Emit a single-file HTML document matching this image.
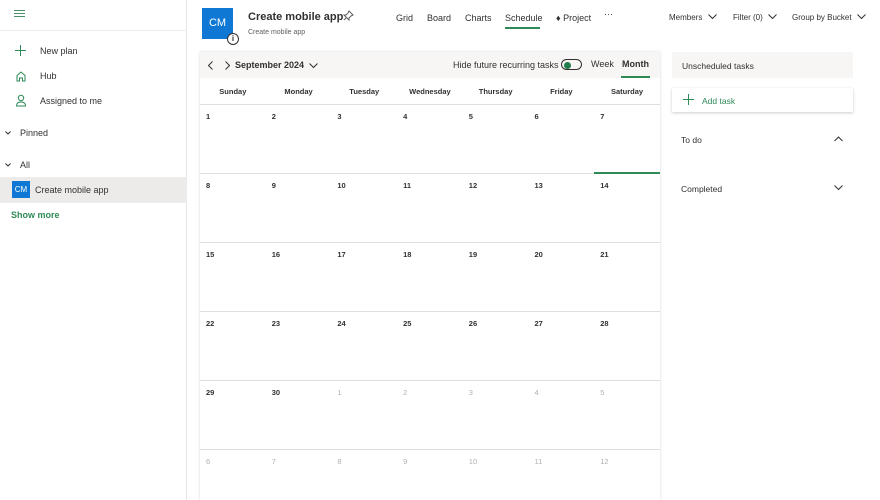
<!DOCTYPE html><html><head><style>
*{margin:0;padding:0;box-sizing:border-box}
body{width:880px;height:500px;overflow:hidden;background:#fff;font-family:"Liberation Sans",sans-serif;color:#323130;position:relative;font-size:9px}
.a{position:absolute}
.side{left:0;top:0;width:187px;height:500px;border-right:1px solid #e5e5e5}
.nav{left:40px;font-size:9px;color:#323130}
.cal{left:200px;top:52px;width:460px;height:448px;box-shadow:0 0 3px rgba(0,0,0,.15);background:#fff}
.tb{left:0;top:0;width:460px;height:26px;background:#f7f6f5}
.wd{top:35px;font-size:7.5px;font-weight:bold;width:65.7px;text-align:center}
.hl{left:0;width:460px;height:1px;background:#e1dfdd}
.dn{font-size:7.5px;font-weight:bold}
.g{color:#b3b0ad;font-weight:normal}
svg.c{position:absolute;fill:none;stroke:#323130;stroke-width:1}
</style></head><body>
<div class="a side">
<div class="a" style="left:14px;top:10px;width:11px;height:1px;background:#4b8f68;box-shadow:0 3px 0 #4b8f68,0 6px 0 #4b8f68"></div>
<div class="a" style="left:0;top:30px;width:187px;height:1px;background:#edebe9"></div>
<svg class="c" style="left:15px;top:45px;stroke:#2e8a57" width="11" height="11"><path d="M5.5 0v11M0 5.5h11"/></svg>
<div class="a nav" style="top:46px">New plan</div>
<svg class="a" style="left:15px;top:70px" width="12" height="12" viewBox="0 0 12 12"><path d="M2 5.5L6 2l4 3.5V11H7.5V8h-3v3H2z" fill="none" stroke="#2e8a57" stroke-width="1"/></svg>
<div class="a nav" style="top:71px">Hub</div>
<svg class="a" style="left:15px;top:94px" width="12" height="13" viewBox="0 0 12 13"><circle cx="6" cy="4" r="2.7" fill="none" stroke="#2e8a57"/><path d="M1.5 12c0-3 2-4 4.5-4s4.5 1 4.5 4z" fill="none" stroke="#2e8a57"/></svg>
<div class="a nav" style="top:96px">Assigned to me</div>
<svg class="c" style="left:5px;top:131px" width="6" height="4"><path d="M.5.5l2.5 2.5 2.5-2.5"/></svg>
<div class="a" style="left:20px;top:128px">Pinned</div>
<svg class="c" style="left:5px;top:163px" width="6" height="4"><path d="M.5.5l2.5 2.5 2.5-2.5"/></svg>
<div class="a" style="left:20px;top:160px">All</div>
<div class="a" style="left:0;top:177px;width:187px;height:26px;background:#edebe9"></div>
<div class="a" style="left:12px;top:181px;width:18px;height:17px;background:#0f78d4;color:#fff;font-size:8px;text-align:center;line-height:17px">CM</div>
<div class="a" style="left:35px;top:185px">Create mobile app</div>
<div class="a" style="left:11px;top:210px;color:#2e8a57;font-weight:bold">Show more</div>
</div>
<div class="a" style="left:202px;top:8px;width:31px;height:31px;background:#0f78d4;color:#fff;font-size:11px;text-align:center;line-height:31px">CM</div>
<div class="a" style="left:227px;top:33px;width:12px;height:12px;border-radius:50%;border:1px solid #323130;background:#fff;font-size:8px;text-align:center;line-height:10px;font-weight:bold">i</div>
<div class="a" style="left:248px;top:11px;font-size:11px;font-weight:bold;color:#323130">Create mobile app</div>
<svg class="c" style="left:343px;top:10px;stroke:#605e5c" width="11" height="11"><path d="M6 1l4 4-2 1-2 2 0 2-5-5 2 0 2-2z M3.5 7.5L1 10"/></svg>
<div class="a" style="left:248px;top:29px;font-size:7px;color:#605e5c">Create mobile app</div>
<div class="a" style="left:396px;top:13px;font-size:9px">Grid</div>
<div class="a" style="left:427px;top:13px;font-size:9px">Board</div>
<div class="a" style="left:465px;top:13px;font-size:9px">Charts</div>
<div class="a" style="left:505px;top:13px;font-size:9px">Schedule</div>
<div class="a" style="left:505px;top:27px;width:35px;height:2px;background:#2e8a57"></div>
<div class="a" style="left:556px;top:13px;font-size:9px">♦ Project</div>
<div class="a" style="left:604px;top:9px;font-size:9px">···</div>
<div class="a" style="left:669px;top:13px;font-size:8px">Members</div>
<svg class="c" style="left:708px;top:14px" width="9" height="6"><path d="M.5.5l4 4 4-4"/></svg>
<div class="a" style="left:733px;top:13px;font-size:8px">Filter (0)</div>
<svg class="c" style="left:768px;top:14px" width="9" height="6"><path d="M.5.5l4 4 4-4"/></svg>
<div class="a" style="left:792px;top:13px;font-size:8px">Group by Bucket</div>
<svg class="c" style="left:857px;top:14px" width="9" height="6"><path d="M.5.5l4 4 4-4"/></svg>
<div class="a cal">
<div class="a tb"></div>
<svg class="c" style="left:8px;top:9px" width="5" height="9"><path d="M4.5.5l-4 4 4 4"/></svg>
<svg class="c" style="left:25px;top:9px" width="5" height="9"><path d="M.5.5l4 4-4 4"/></svg>
<div class="a" style="left:35px;top:8px;font-size:9px;font-weight:bold">September 2024</div>
<svg class="c" style="left:109px;top:11px" width="9" height="6"><path d="M.5.5l4 4 4-4"/></svg>
<div class="a" style="left:253px;top:8px;font-size:9px">Hide future recurring tasks</div>
<div class="a" style="left:361px;top:7px;width:21px;height:11px;border:1px solid #323130;border-radius:6px"><div style="position:absolute;left:2px;top:1.5px;width:7px;height:7px;border-radius:50%;background:#237b4b"></div></div>
<div class="a" style="left:391px;top:7px;font-size:9px">Week</div>
<div class="a" style="left:422px;top:7px;font-size:9px;font-weight:bold">Month</div>
<div class="a" style="left:421px;top:24px;width:29px;height:2px;background:#2e8a57"></div>
<div class="a wd" style="left:0">Sunday</div><div class="a wd" style="left:65.7px">Monday</div><div class="a wd" style="left:131.4px">Tuesday</div><div class="a wd" style="left:197.1px">Wednesday</div><div class="a wd" style="left:262.8px">Thursday</div><div class="a wd" style="left:328.5px">Friday</div><div class="a wd" style="left:394.2px">Saturday</div>
<div class="a hl" style="top:52px"></div>
<div class="a hl" style="top:121px"></div>
<div class="a hl" style="top:190px"></div>
<div class="a hl" style="top:259px"></div>
<div class="a hl" style="top:328px"></div>
<div class="a hl" style="top:397px"></div>
<div class="a" style="left:394px;top:120px;width:66px;height:2px;background:#2e8a57"></div>
<div id="d"></div>
</div>
<div class="a" style="left:672px;top:52px;width:181px;height:26px;background:#f7f6f5"></div>
<div class="a" style="left:682px;top:61px;font-size:8.5px">Unscheduled tasks</div>
<div class="a" style="left:672px;top:88px;width:181px;height:24px;background:#fff;box-shadow:0 1px 3px rgba(0,0,0,.2)"></div>
<svg class="c" style="left:683px;top:94px;stroke:#2e8a57" width="11" height="11"><path d="M5.5 0v11M0 5.5h11"/></svg>
<div class="a" style="left:702px;top:96px;font-size:8.5px;color:#2e8a57">Add task</div>
<div class="a" style="left:681px;top:135px;font-size:8.5px">To do</div>
<svg class="c" style="left:834px;top:136px" width="9" height="6"><path d="M.5 5l4-4 4 4"/></svg>
<div class="a" style="left:681px;top:184px;font-size:8.5px">Completed</div>
<svg class="c" style="left:834px;top:185px" width="9" height="6"><path d="M.5.5l4 4 4-4"/></svg>
<script>
var h='',r=[[1,2,3,4,5,6,7],[8,9,10,11,12,13,14],[15,16,17,18,19,20,21],[22,23,24,25,26,27,28],[29,30,'1g','2g','3g','4g','5g'],['6g','7g','8g','9g','10g','11g','12g']];
r.forEach(function(w,i){w.forEach(function(d,j){var s=String(d),g=s.indexOf('g')>0;h+='<div class="a dn'+(g?' g':'')+'" style="left:'+(6+j*65.7)+'px;top:'+(60+i*69)+'px">'+s.replace('g','')+'</div>';});});
document.getElementById('d').outerHTML=h;
</script>
</body></html>
